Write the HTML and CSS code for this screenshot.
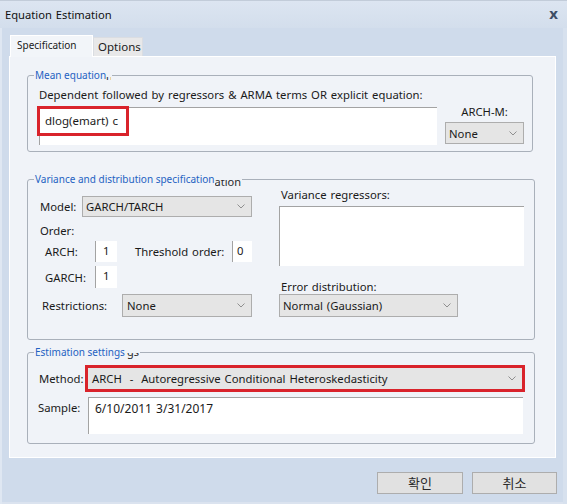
FILE: index.html
```html
<!DOCTYPE html>
<html>
<head>
<meta charset="utf-8">
<link rel="stylesheet" href="styles.css">
</head>
<body>
<div class="window">
  <div class="titlebar">
    <span class="title">Equation Estimation</span>
    <span class="close">x</span>
  </div>
  <div class="tabs">
    <div class="tab active">Specification</div>
    <div class="tab">Options</div>
  </div>
  <div class="panel">
    <fieldset class="group mean">
      <legend>Mean equation<span class="ghost g-mean"><span>n</span></span></legend>
      <div class="mean-body">
        <div class="mean-left">
          <div class="lbl">Dependent followed by regressors &amp; ARMA terms OR explicit equation:</div>
          <div class="textbox eq"><div class="hl">dlog(emart) c</div></div>
        </div>
        <div class="mean-right">
          <div class="lbl center">ARCH-M:</div>
          <div class="select archm"><span>None</span><svg class="chev" width="8" height="5" viewBox="0 0 8 5"><polyline points="0.5,0.5 4,4 7.5,0.5" fill="none" stroke="#8f8f8f" stroke-width="1"/></svg></div>
        </div>
      </div>
    </fieldset>

    <fieldset class="group variance">
      <legend>Variance and distribution specification<span class="ghost g-var"><span>ation</span></span></legend>
      <div class="var-body">
        <div class="var-left">
          <div class="row model">
            <span class="rlbl w-model">Model:</span>
            <div class="select sel-model"><span>GARCH/TARCH</span><svg class="chev" width="8" height="5" viewBox="0 0 8 5"><polyline points="0.5,0.5 4,4 7.5,0.5" fill="none" stroke="#8f8f8f" stroke-width="1"/></svg></div>
          </div>
          <div class="lbl order">Order:</div>
          <div class="row arch">
            <span class="rlbl w-arch">ARCH:</span>
            <div class="num n-arch">1</div>
            <span class="rlbl w-thr">Threshold order:</span>
            <div class="num n-thr">0</div>
          </div>
          <div class="row garch">
            <span class="rlbl w-arch">GARCH:</span>
            <div class="num n-arch">1</div>
          </div>
          <div class="row restr">
            <span class="rlbl w-restr">Restrictions:</span>
            <div class="select sel-restr"><span>None</span><svg class="chev" width="8" height="5" viewBox="0 0 8 5"><polyline points="0.5,0.5 4,4 7.5,0.5" fill="none" stroke="#8f8f8f" stroke-width="1"/></svg></div>
          </div>
        </div>
        <div class="var-right">
          <div class="lbl pl2">Variance regressors:</div>
          <div class="textbox varreg"></div>
          <div class="lbl pl2 errlbl">Error distribution:</div>
          <div class="select sel-err"><span>Normal (Gaussian)</span><svg class="chev" width="8" height="5" viewBox="0 0 8 5"><polyline points="0.5,0.5 4,4 7.5,0.5" fill="none" stroke="#8f8f8f" stroke-width="1"/></svg></div>
        </div>
      </div>
    </fieldset>

    <fieldset class="group estim">
      <legend>Estimation settings<span class="ghost g-est"><span>gs</span></span></legend>
      <div class="est-body">
        <div class="row method">
          <span class="rlbl w-method">Method:</span>
          <div class="select sel-method"><span>ARCH&nbsp;&nbsp;-&nbsp;&nbsp;Autoregressive Conditional Heteroskedasticity</span><svg class="chev" width="8" height="5" viewBox="0 0 8 5"><polyline points="0.5,0.5 4,4 7.5,0.5" fill="none" stroke="#8f8f8f" stroke-width="1"/></svg></div>
        </div>
        <div class="row sample">
          <span class="rlbl w-sample">Sample:</span>
          <div class="textbox sampbox">6/10/2011 3/31/2017</div>
        </div>
      </div>
    </fieldset>
  </div>
  <div class="footer">
    <div class="btn ok">확인</div>
    <div class="btn cancel">취소</div>
  </div>
</div>
</body>
</html>
```

FILE: styles.css
```css
* { box-sizing: border-box; }
html, body { margin: 0; padding: 0; }
body {
  width: 567px;
  height: 504px;
  overflow: hidden;
  font-family: "Noto Sans", "Noto Sans CJK KR", sans-serif;
  font-size: 11.3px;
  word-spacing: 1px;
  color: #1a1a1a;
  background: #cfdbeb;
}
.window {
  width: 567px;
  height: 504px;
  background: #cfdbeb;
  display: flex;
  flex-direction: column;
  box-shadow: inset 2px 0 0 #dfe7f2, inset -4px 0 0 #d7e1ee, inset 0 -2px 0 #dbe3ef;
}
.titlebar {
  height: 28px;
  flex: none;
  display: flex;
  align-items: center;
  justify-content: space-between;
  padding: 0 9px 0 5px;
  background: linear-gradient(#dce5f1, #d3deec);
  border-top: 1px solid #c2ccd9;
}
.title { font-size: 11.2px; word-spacing: 1px; color: #111; }
.close { font-size: 15px; font-weight: bold; color: #3e4e66; line-height: 1; margin-top: -2px; }
.tabs {
  height: 28px;
  flex: none;
  display: flex;
  align-items: flex-end;
  padding-left: 10px;
}
.tab {
  position: relative;
  height: 19px;
  width: 50px;
  background: #e8e8e9;
  border: 1px solid #dadde2;
  border-bottom: none;
  font-size: 11.5px;
  line-height: 18px;
  padding-left: 4px;
}
.tab.active {
  z-index: 1;
  width: 83px;
  height: 22px;
  margin-bottom: -1px;
  background: #f2f5f9;
  border: 1px solid #ffffff;
  border-bottom: none;
  font-size: 10px;
  line-height: 19px;
  padding-left: 6px;
}
.panel {
  flex: none;
  margin-left: 9px;
  width: 547px;
  height: 402px;
  background: #f0f3f8;
  border: 1px solid #ffffff;
  display: flex;
  flex-direction: column;
}
.group {
  margin: 0 0 0 17px;
  padding: 0;
  border: 1px solid #a9b0ba;
  border-radius: 3px;
  min-width: 0;
}
.group legend {
  font-size: 10px;
  word-spacing: 0;
  line-height: 14px;
  color: #2462c2;
  padding: 0 1px;
  margin-left: 6px;
  white-space: nowrap;
}
.ghost {
  display: inline-block;
  overflow: hidden;
  color: #2b2b2b;
  font-size: 11px;
  vertical-align: top;
}
.ghost span { display: block; line-height: 16px; }
.g-mean { height: 4px; margin-top: 9px; width: 5px; margin-left: 0; }
.g-mean span { margin-top: -9px; }
.g-var { height: 6px; margin-top: 8px; margin-left: 0; }
.g-var span { margin-top: -6px; }
.g-est { height: 6px; margin-top: 8px; margin-left: 2px; }
.g-est span { margin-top: -9px; }

.mean { margin-top: 11px; width: 506px; height: 84px; }
.variance { margin-top: 20px; width: 508px; height: 168px; }
.estim { margin-top: 5px; width: 508px; height: 99px; }

.lbl { line-height: 16px; white-space: nowrap; }
.center { text-align: center; }
.pl2 { padding-left: 2px; }

.mean-body { display: flex; padding: 5px 0 0 11px; }
.mean-left { width: 398px; }
.mean-right { width: 79px; margin-left: 8px; padding-top: 17px; }

.textbox {
  background: #ffffff;
  border-top: 1px solid #a3a3a3;
  border-left: 1px solid #a3a3a3;
}
.eq { margin-top: 4px; height: 38px; }
.hl {
  width: 92px;
  height: 30px;
  margin: -2px 0 0 -3px;
  border: 3px solid #d9232b;
  padding-left: 5px;
  line-height: 24px;
  font-size: 11.5px;
}

.select {
  display: flex;
  align-items: center;
  justify-content: space-between;
  background: #e5e5e5;
  border: 1px solid #adadad;
  padding: 0 6px 0 3px;
  white-space: nowrap;
}
.chev { flex: none; }
.archm { margin-top: 2px; height: 22px; }

.var-body { display: flex; padding-left: 12px; }
.var-left { width: 212px; }
.var-right { width: 245px; margin-left: 27px; }
.row { display: flex; align-items: center; }
.rlbl { white-space: nowrap; flex: none; }
.model { margin-top: 10px; height: 21px; }
.w-model { width: 42px; }
.sel-model { width: 170px; height: 21px; }
.order { margin-top: 6px; }
.arch { margin-top: 2px; height: 21px; }
.garch { margin-top: 4px; height: 22px; }
.w-arch { width: 50px; margin-left: 5px; }
.w-thr { width: 97px; margin-left: 18px; }
.num {
  height: 100%;
  background: #ffffff;
  border-left: 1px solid #a3a3a3;
  line-height: 20px;
}
.n-arch { width: 22px; padding-left: 7px; }
.n-thr { width: 20px; padding-left: 4px; }
.restr { margin-top: 6px; height: 23px; }
.w-restr { width: 80px; margin-left: 2px; }
.sel-restr { width: 130px; height: 23px; padding-left: 4px; }

.var-right .lbl:first-child { margin-top: 1px; }
.varreg { margin-top: 3px; height: 60px; }
.errlbl { margin-top: 13px; line-height: 15px; }
.sel-err { width: 179px; height: 23px; }

.est-body { padding-top: 6px; }
.method { height: 27px; }
.w-method { width: 57px; padding-left: 11px; }
.sel-method {
  width: 440px;
  height: 27px;
  border: 3px solid #d9232b;
  padding: 0 6px 0 4px;
}
.sample { margin-top: 5px; align-items: flex-start; }
.w-sample { width: 60px; padding-left: 10px; padding-top: 3px; line-height: 16px; }
.sampbox { width: 435px; height: 37px; padding: 3px 6px; line-height: 16px; font-size: 12px; }

.footer {
  flex: 1;
  display: flex;
  justify-content: flex-end;
  align-items: flex-start;
  padding: 14px 10px 0 0;
  gap: 9px;
}
.btn {
  height: 22px;
  background: #e1e1e1;
  border: 1px solid #adadad;
  font-family: "Noto Sans CJK KR", sans-serif;
  font-size: 13px;
  word-spacing: 0;
  line-height: 20px;
  text-align: center;
  color: #2a2a2a;
}
.ok { width: 86px; }
.cancel { width: 85px; }
```
